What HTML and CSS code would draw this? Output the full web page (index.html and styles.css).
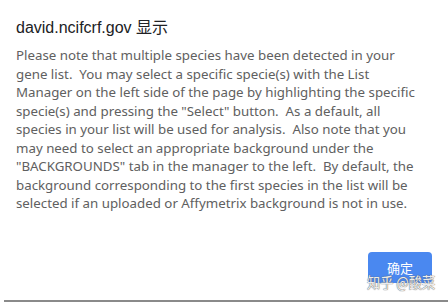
FILE: index.html
```html
<!DOCTYPE html>
<html>
<head>
<meta charset="utf-8">
<link rel="stylesheet" href="styles.css">
</head>
<body>
<div class="dialog">
  <div class="title">david.ncifcrf.gov 显示</div>
  <div class="message">Please note that multiple species have been detected in your
gene list.  You may select a specific specie(s) with the List
Manager on the left side of the page by highlighting the specific
specie(s) and pressing the "Select" button.  As a default, all
species in your list will be used for analysis.  Also note that you
may need to select an appropriate background under the
"BACKGROUNDS" tab in the manager to the left.  By default, the
background corresponding to the first species in the list will be
selected if an uploaded or Affymetrix background is not in use.</div>
  <div class="actions">
    <button class="ok">确定</button>
    <span class="watermark">知乎 @酸菜</span>
  </div>
</div>
<div class="edge"></div>
</body>
</html>
```
FILE: styles.css
```css
html, body {
  margin: 0;
  padding: 0;
  background: #ffffff;
  width: 448px;
  height: 302px;
  overflow: hidden;
}
.dialog {
  height: 300px;
  box-sizing: border-box;
  padding: 17px 16px 0 16px;
  display: flex;
  flex-direction: column;
  font-family: "Noto Sans", "Noto Sans CJK SC", sans-serif;
}
.title {
  font-family: "Liberation Sans", "Noto Sans CJK SC", sans-serif;
  font-size: 16px;
  line-height: 22px;
  color: #202124;
}
.message {
  margin-top: 7px;
  font-size: 13.3px;
  line-height: 18.5px;
  color: #606060;
  white-space: pre-wrap;
}
.actions {
  position: relative;
  display: flex;
  justify-content: flex-end;
  margin-top: 39px;
}
.ok {
  width: 64px;
  height: 31px;
  background: #4a88f0;
  border: none;
  border-radius: 4px;
  color: #ffffff;
  font-family: "Noto Sans CJK SC", sans-serif;
  font-size: 13px;
  line-height: 13px;
  padding: 0;
}
.watermark {
  position: absolute;
  left: 351px;
  top: 22px;
  font-family: "Noto Sans CJK SC", sans-serif;
  font-size: 15px;
  line-height: 15px;
  transform: scaleX(0.88);
  transform-origin: left top;
  color: rgba(255,255,255,0.9);
  text-shadow: 0 0 1px #666, 0 0 1px #666;
  white-space: nowrap;
}
.edge {
  height: 2px;
  margin-left: 4px;
  background: #8a8a8a;
}
```
